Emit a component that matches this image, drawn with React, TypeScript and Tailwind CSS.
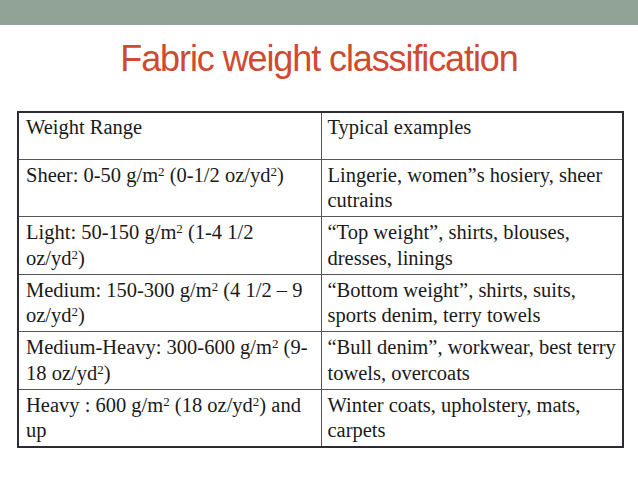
function Sup() {
  return <sup className="text-[13px] top-[-0.45em]">2</sup>;
}

const rows: { range: React.ReactNode; examples: string }[] = [
  {
    range: (
      <>
        Sheer: 0-50 g/m<Sup /> (0-1/2 oz/yd<Sup />)
      </>
    ),
    examples: 'Lingerie, women\u201ds hosiery, sheer cutrains',
  },
  {
    range: (
      <>
        Light: 50-150 g/m<Sup /> (1-4 1/2 oz/yd<Sup />)
      </>
    ),
    examples: '\u201cTop weight\u201d, shirts, blouses, dresses, linings',
  },
  {
    range: (
      <>
        Medium: 150-300 g/m<Sup /> (4 1/2 {'\u2013'} 9 oz/yd<Sup />)
      </>
    ),
    examples: '\u201cBottom weight\u201d, shirts, suits, sports denim, terry towels',
  },
  {
    range: (
      <>
        Medium-Heavy: 300-600 g/m<Sup /> (9-18 oz/yd<Sup />)
      </>
    ),
    examples: '\u201cBull denim\u201d, workwear, best terry towels, overcoats',
  },
  {
    range: (
      <>
        Heavy : 600 g/m<Sup /> (18 oz/yd<Sup />) and up
      </>
    ),
    examples: 'Winter coats, upholstery, mats, carpets',
  },
];

export default function App() {
  return (
    <div className="w-[638px] h-[478px] bg-white flex flex-col overflow-hidden">
      <div className="h-[25px] bg-[#91a297] shrink-0" />

      <h1 className="mt-[12px] text-center text-[36px] leading-[44px] tracking-[-1.1px] text-[#d04a30] [font-family:Liberation_Sans,Arial,sans-serif]">
        Fabric weight classification
      </h1>

      <div className="mt-[30px] mx-[17px] font-serif">
        <table className="w-[607px] table-fixed border-collapse border-2 border-[#2c2c34] text-[20.5px] leading-[25.5px] text-[#1a1a1a] [font-family:Liberation_Serif]">
          <tbody>
            <tr className="h-[47px]">
              <td className="w-[303px] border border-[#555] align-top pl-[7px] pr-[4px] pt-[2px]">Weight Range</td>
              <td className="border border-[#555] align-top pl-[6px] pr-[4px] pt-[2px]">Typical examples</td>
            </tr>
            {rows.map((r, i) => (
              <tr key={i} className="h-[57.5px]">
                <td className="border border-[#555] align-top pl-[7px] pr-[4px] pt-[3px]">{r.range}</td>
                <td className="border border-[#555] align-top pl-[6px] pr-[4px] pt-[3px]">{r.examples}</td>
              </tr>
            ))}
          </tbody>
        </table>
      </div>
    </div>
  );
}
